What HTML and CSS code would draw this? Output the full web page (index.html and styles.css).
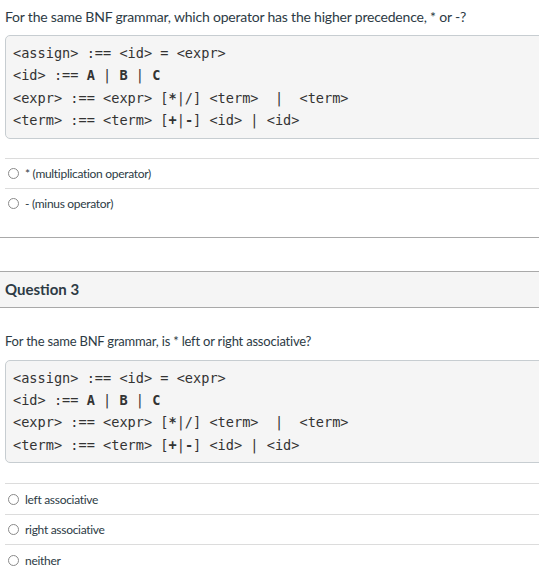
FILE: index.html
```html
<!DOCTYPE html>
<html>
<head>
<meta charset="utf-8">
<link rel="stylesheet" href="styles.css">
</head>
<body>
<div class="page">
  <section class="question q2">
    <p class="qtext">For the same BNF grammar, which operator has the higher precedence, * or -?</p>
    <div class="code">
      <div class="line">&lt;assign&gt; :== &lt;id&gt; = &lt;expr&gt;</div>
      <div class="line">&lt;id&gt; :== <b>A</b> | <b>B</b> | <b>C</b></div>
      <div class="line">&lt;expr&gt; :== &lt;expr&gt; [<b>*</b>|/] &lt;term&gt;  |  &lt;term&gt;</div>
      <div class="line">&lt;term&gt; :== &lt;term&gt; [<b>+</b>|<b>-</b>] &lt;id&gt; | &lt;id&gt;</div>
    </div>
    <div class="answers">
      <label class="answer"><span class="radio"></span><span class="atext">* (multiplication operator)</span></label>
      <label class="answer"><span class="radio"></span><span class="atext">- (minus operator)</span></label>
    </div>
  </section>

  <div class="qheader">Question 3</div>

  <section class="question q3">
    <p class="qtext">For the same BNF grammar, is * left or right associative?</p>
    <div class="code">
      <div class="line">&lt;assign&gt; :== &lt;id&gt; = &lt;expr&gt;</div>
      <div class="line">&lt;id&gt; :== <b>A</b> | <b>B</b> | <b>C</b></div>
      <div class="line">&lt;expr&gt; :== &lt;expr&gt; [<b>*</b>|/] &lt;term&gt;  |  &lt;term&gt;</div>
      <div class="line">&lt;term&gt; :== &lt;term&gt; [<b>+</b>|<b>-</b>] &lt;id&gt; | &lt;id&gt;</div>
    </div>
    <div class="answers">
      <label class="answer"><span class="radio"></span><span class="atext">left associative</span></label>
      <label class="answer"><span class="radio"></span><span class="atext">right associative</span></label>
      <label class="answer"><span class="radio"></span><span class="atext">neither</span></label>
    </div>
  </section>
</div>
</body>
</html>
```
FILE: styles.css
```css
html, body {
  margin: 0;
  padding: 0;
  overflow: hidden;
  background: #fff;
}
body {
  font-family: Lato, "Noto Sans", sans-serif;
  color: #2d3b45;
}
.page {
  width: 570px;
}
.question {
  display: flex;
  flex-direction: column;
}
.q2 {
  padding-top: 7px;
  padding-bottom: 19px;
  border-bottom: 1px solid #a9a9a9;
}
.q3 {
  padding-top: 23px;
}
.qtext {
  margin: 0 0 0 5px;
  font-size: 14px;
  line-height: 20px;
  letter-spacing: -0.2px;
}
.q3 .qtext {
  font-size: 13px;
}
.code {
  margin: 8px 0 0 5px;
  padding: 6px 7px;
  background: #f5f5f5;
  border: 1px solid #c7cdd1;
  border-radius: 5px;
  font-family: "DejaVu Sans Mono", monospace;
  font-size: 13.6px;
  line-height: 22.4px;
  color: #333;
}
.line {
  white-space: pre;
}
.q3 .code { margin-top: 9px; }
.code b { font-weight: bold; }
.answers {
  margin: 19px 0 0 5px;
  display: flex;
  flex-direction: column;
}
.q3 .answers { margin-top: 20px; }
.answer {
  display: flex;
  align-items: center;
  height: 30px;
  border-top: 1px solid #dcdcdc;
  box-sizing: border-box;
}
.q3 .answer { height: 30.5px; }
.radio {
  width: 9px;
  height: 9px;
  border: 1px solid #8a8a8a;
  border-radius: 50%;
  margin: 0 6px 0 3px;
  flex: none;
}
.atext {
  font-size: 12px;
  letter-spacing: -0.3px;
}
.qheader {
  margin-top: 33px;
  height: 35px;
  background: #f5f5f5;
  border-top: 1px solid #a9a9a9;
  border-bottom: 1px solid #a9a9a9;
  display: flex;
  align-items: center;
  padding-left: 5px;
  font-size: 15px;
  font-weight: bold;
}
```
